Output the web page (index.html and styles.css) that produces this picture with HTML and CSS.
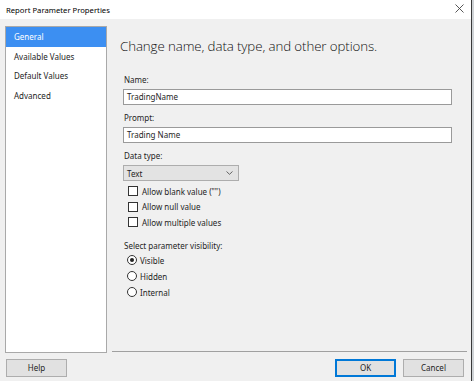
FILE: index.html
```html
<!DOCTYPE html>
<html>
<head>
<meta charset="utf-8">
<link rel="stylesheet" href="styles.css">
</head>
<body>
<div class="window">
  <div class="titlebar">
    <span class="title">Report Parameter Properties</span>
    <span class="close">
      <svg width="9" height="9" viewBox="0 0 9 9"><path d="M0.5 0.5 L8.5 8.5 M8.5 0.5 L0.5 8.5" stroke="#444" stroke-width="0.9" fill="none"/></svg>
    </span>
  </div>
  <div class="client">
    <div class="main">
      <div class="nav">
        <div class="nav-item selected">General</div>
        <div class="nav-item">Available Values</div>
        <div class="nav-item">Default Values</div>
        <div class="nav-item">Advanced</div>
      </div>
      <div class="content">
        <div class="heading">Change name, data type, and other options.</div>
        <div class="label first">Name:</div>
        <div class="textbox">TradingName</div>
        <div class="label">Prompt:</div>
        <div class="textbox">Trading Name</div>
        <div class="label">Data type:</div>
        <div class="select">
          <span>Text</span>
          <svg width="7" height="4" viewBox="0 0 7 4"><path d="M0.5 0.5 L3.5 3.3 L6.5 0.5" stroke="#555" stroke-width="0.9" fill="none"/></svg>
        </div>
        <div class="checks">
          <div class="check"><span class="box"></span><span>Allow blank value ("")</span></div>
          <div class="check"><span class="box"></span><span>Allow null value</span></div>
          <div class="check"><span class="box"></span><span>Allow multiple values</span></div>
        </div>
        <div class="label vis">Select parameter visibility:</div>
        <div class="radios">
          <div class="radio"><span class="circle on"></span><span>Visible</span></div>
          <div class="radio"><span class="circle"></span><span>Hidden</span></div>
          <div class="radio"><span class="circle"></span><span>Internal</span></div>
        </div>
      </div>
    </div>
    <div class="footer">
      <div class="btn">Help</div>
      <div class="spacer"></div>
      <div class="btn default">OK</div>
      <div class="btn">Cancel</div>
    </div>
  </div>
</div>
</body>
</html>
```
FILE: styles.css
```css
html, body {
  margin: 0;
  padding: 0;
}
* {
  box-sizing: border-box;
}
body {
  width: 474px;
  height: 381px;
  background: #cfd3d6;
  font-family: "Noto Sans", "Open Sans", sans-serif;
  font-size: 8px;
  color: #1e1e1e;
  overflow: hidden;
}
.window {
  width: 472px;
  height: 381px;
  border-right: 1px solid #3a3a3a;
  background: #f0f0f0;
  display: flex;
  flex-direction: column;
}
.titlebar {
  height: 19px;
  background: #ffffff;
  display: flex;
  align-items: center;
  justify-content: space-between;
  padding-left: 6px;
  padding-right: 7px;
}
.title {
  font-size: 7.7px;
  color: #000;
}
.close {
  display: flex;
  flex: none;
  width: 9px;
  height: 9px;
  margin-top: -3px;
}
.client {
  flex: 1;
  display: flex;
  flex-direction: column;
  padding: 7px 4px 0 5px;
}
.main {
  display: flex;
  height: 327px;
}
.nav {
  width: 102px;
  height: 327px;
  background: #fff;
  border: 1px solid #a9a9a9;
}
.nav-item {
  height: 19.5px;
  line-height: 19.5px;
  padding-left: 8px;
}
.nav-item.selected {
  background: #3c8ff2;
  color: #fff;
}
.content {
  flex: 1;
  margin-left: 5px;
  margin-bottom: 1px;
  border-bottom: 1px solid #a0a0a0;
  padding-left: 11px;
  padding-right: 15px;
  padding-top: 10px;
}
.heading {
  font-family: "Open Sans", "Noto Sans", sans-serif;
  font-weight: 300;
  font-size: 13.3px;
  height: 20px;
  line-height: 20px;
  color: #111;
  margin-left: -3px;
  letter-spacing: -0.1px;
}
.label {
  height: 12px;
  line-height: 12px;
  margin-top: 7px;
  margin-bottom: 3px;
  padding-left: 1px;
}
.label.first {
  margin-top: 18px;
}
.textbox {
  height: 16px;
  line-height: 14px;
  background: #fff;
  border: 1px solid #9a9a9a;
  padding-left: 3px;
}
.select {
  width: 116px;
  height: 16px;
  background: #e3e3e3;
  border: 1px solid #adadad;
  display: flex;
  align-items: center;
  justify-content: space-between;
  padding: 0 5px 0 3px;
}
.checks {
  margin-top: 2.5px;
  padding-left: 5px;
}
.check, .radio {
  height: 15.5px;
  display: flex;
  align-items: center;
}
.box {
  width: 10px;
  height: 10px;
  border: 1px solid #333;
  background: #fff;
  margin-right: 4px;
}
.label.vis {
  margin-top: 9.5px;
  margin-bottom: 0.5px;
}
.radios {
  padding-left: 4px;
}
.radio {
  height: 16px;
}
.circle {
  width: 10px;
  height: 10px;
  border: 1px solid #333;
  border-radius: 50%;
  background: #fff;
  margin-right: 3px;
  display: flex;
  align-items: center;
  justify-content: center;
}
.circle.on::after {
  content: "";
  width: 4px;
  height: 4px;
  border-radius: 50%;
  background: #222;
}
.footer {
  display: flex;
  margin-top: 6px;
  gap: 7px;
  padding-left: 1px;
  padding-right: 3px;
}
.spacer {
  flex: 1;
}
.btn {
  width: 61px;
  height: 18px;
  line-height: 16px;
  text-align: center;
  background: #e1e1e1;
  border: 1px solid #adadad;
}
.btn.default {
  border: 1px solid #0078d7;
  box-shadow: inset 0 0 0 1px #0078d7;
}
```
